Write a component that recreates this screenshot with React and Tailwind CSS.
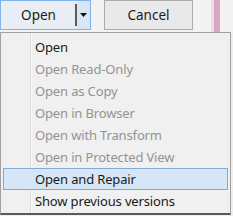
import React from "react";

const items = [
  { label: "Open", enabled: true },
  { label: "Open Read-Only" },
  { label: "Open as Copy" },
  { label: "Open in Browser" },
  { label: "Open with Transform" },
  { label: "Open in Protected View" },
  { label: "Open and Repair", enabled: true, active: true },
  { label: "Show previous versions", enabled: true },
];

export default function App() {
  return (
    <div
      className="w-[233px] h-[216px] bg-[#efefef] overflow-hidden flex flex-col"
      style={{ fontFamily: '"Noto Sans", "Open Sans", sans-serif' }}
    >
      <div className="flex h-[32px] shrink-0 bg-[#f3f3f3]">
        <div className="w-[91px] h-[30px] border border-[#7eb4ea] bg-[#e8eef4] flex">
          <div className="flex-1 flex items-center justify-center text-[13.5px] text-[#1a1a1a] pl-[1px]">
            Open
          </div>
          <div className="w-[2px] bg-[#5a5a5a] my-[3px]" />
          <div className="w-[13px] bg-[#d8e7f6] flex items-center justify-center">
            <svg width="7" height="4" viewBox="0 0 7 4">
              <path d="M0 0h7L3.5 4z" fill="#111" />
            </svg>
          </div>
        </div>
        <div className="ml-[13px] w-[89px] h-[30px] border border-[#acacac] bg-[#e9e9e9] flex items-center justify-center text-[13.5px] text-[#1a1a1a]">
          Cancel
        </div>
        <div className="ml-[18px] w-[3px] bg-[#f1dbe6]" />
        <div className="w-[6px] bg-[#d8a7c0]" />
      </div>
      <div className="relative w-[231px] h-[183px] border border-[#a0a0a0] border-b-[#5a5a5a] border-b-2 bg-[#f0f0f0] pt-[3px] px-[2px]">
        <div className="absolute left-[29px] top-0 bottom-0 w-px bg-[#dcdcdc]" />
        <div className="absolute left-[30px] top-0 bottom-0 w-px bg-[#fafafa]" />
        {items.map((it) => (
          <div
            key={it.label}
            className={
              "relative h-[22px] flex items-center pl-[31px] text-[13px] tracking-[-0.15px] leading-none border " +
              (it.active
                ? "bg-[#d5e6f7] border-[#84a9d4]"
                : "border-transparent") +
              (it.enabled ? " text-[#1a1a1a]" : " text-[#939393]")
            }
          >
            {it.label}
          </div>
        ))}
      </div>
    </div>
  );
}
